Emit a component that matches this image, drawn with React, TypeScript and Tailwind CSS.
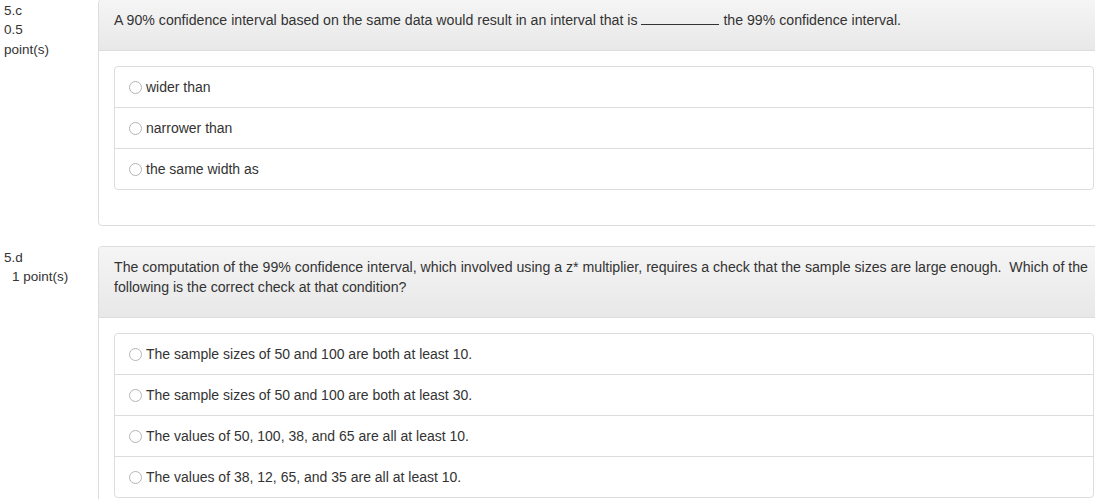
const font = { fontFamily: '"Liberation Sans", Arial, sans-serif' };

type Q = {
  id: string;
  points: string;
  indent: boolean;
  lines: React.ReactNode;
  options: string[];
};

function Radio() {
  return <span className="inline-block w-[13px] h-[13px] rounded-full border border-[#b5b5b5] bg-white mr-[4px] shrink-0" />;
}

function Question({ q }: { q: Q }) {
  return (
    <div className="flex">
      <div className="w-[98px] shrink-0 pl-[4px] pt-[1.5px] text-[13.5px] leading-[19.5px] text-[#333]">
        {q.indent ? (
          <>
            <div>{q.id}</div>
            <div className="pl-[8px]">{q.points}</div>
          </>
        ) : (
          <>
            <div>{q.id}</div>
            <div>{q.points.split(' ')[0]}</div>
            <div>{q.points.split(' ')[1]}</div>
          </>
        )}
      </div>
      <div className="w-[1013px] shrink-0 border border-[#dddddd] rounded-[4px] bg-white">
        <div className="bg-gradient-to-b from-[#f5f5f5] to-[#e8e8e8] border-b border-[#dddddd] rounded-t-[4px] pl-[15px] pt-[10px] pb-[20px] text-[14.15px] leading-[20px] text-[#333]">
          {q.lines}
        </div>
        <div className="px-[15px] pt-[15px] pb-[15px]">
          <div className="border border-[#dddddd] rounded-[4px] mb-[20px] mr-[1px]">
            {q.options.map((o, i) => (
              <div
                key={o}
                className={`flex items-center h-[40px] pl-[14px] text-[14px] text-[#333] ${i > 0 ? 'border-t border-[#dddddd] h-[41px]' : ''}`}
              >
                <Radio />
                <span>{o}</span>
              </div>
            ))}
          </div>
        </div>
      </div>
    </div>
  );
}

const questions: Q[] = [
  {
    id: '5.c',
    points: '0.5 point(s)',
    indent: false,
    lines: (
      <>
        A 90% confidence interval based on the same data would result in an interval that is{' '}
        <span className="inline-block w-[78px] border-b border-[#333] align-baseline" /> the 99% confidence interval.
      </>
    ),
    options: ['wider than', 'narrower than', 'the same width as'],
  },
  {
    id: '5.d',
    points: '1 point(s)',
    indent: true,
    lines: (
      <>
        <div className="whitespace-nowrap">
          The computation of the 99% confidence interval, which involved using a z* multiplier, requires a check that the sample sizes are large enough.{'\u00a0 '}Which of the
        </div>
        <div>following is the correct check at that condition?</div>
      </>
    ),
    options: [
      'The sample sizes of 50 and 100 are both at least 10.',
      'The sample sizes of 50 and 100 are both at least 30.',
      'The values of 50, 100, 38, and 65 are all at least 10.',
      'The values of 38, 12, 65, and 35 are all at least 10.',
    ],
  },
];

export default function App() {
  return (
    <div className="w-[1095px] h-[499px] overflow-hidden bg-white" style={font}>
      <div className="flex flex-col gap-[20px] -mt-[1px]">
        {questions.map((q) => (
          <Question key={q.id} q={q} />
        ))}
      </div>
    </div>
  );
}
